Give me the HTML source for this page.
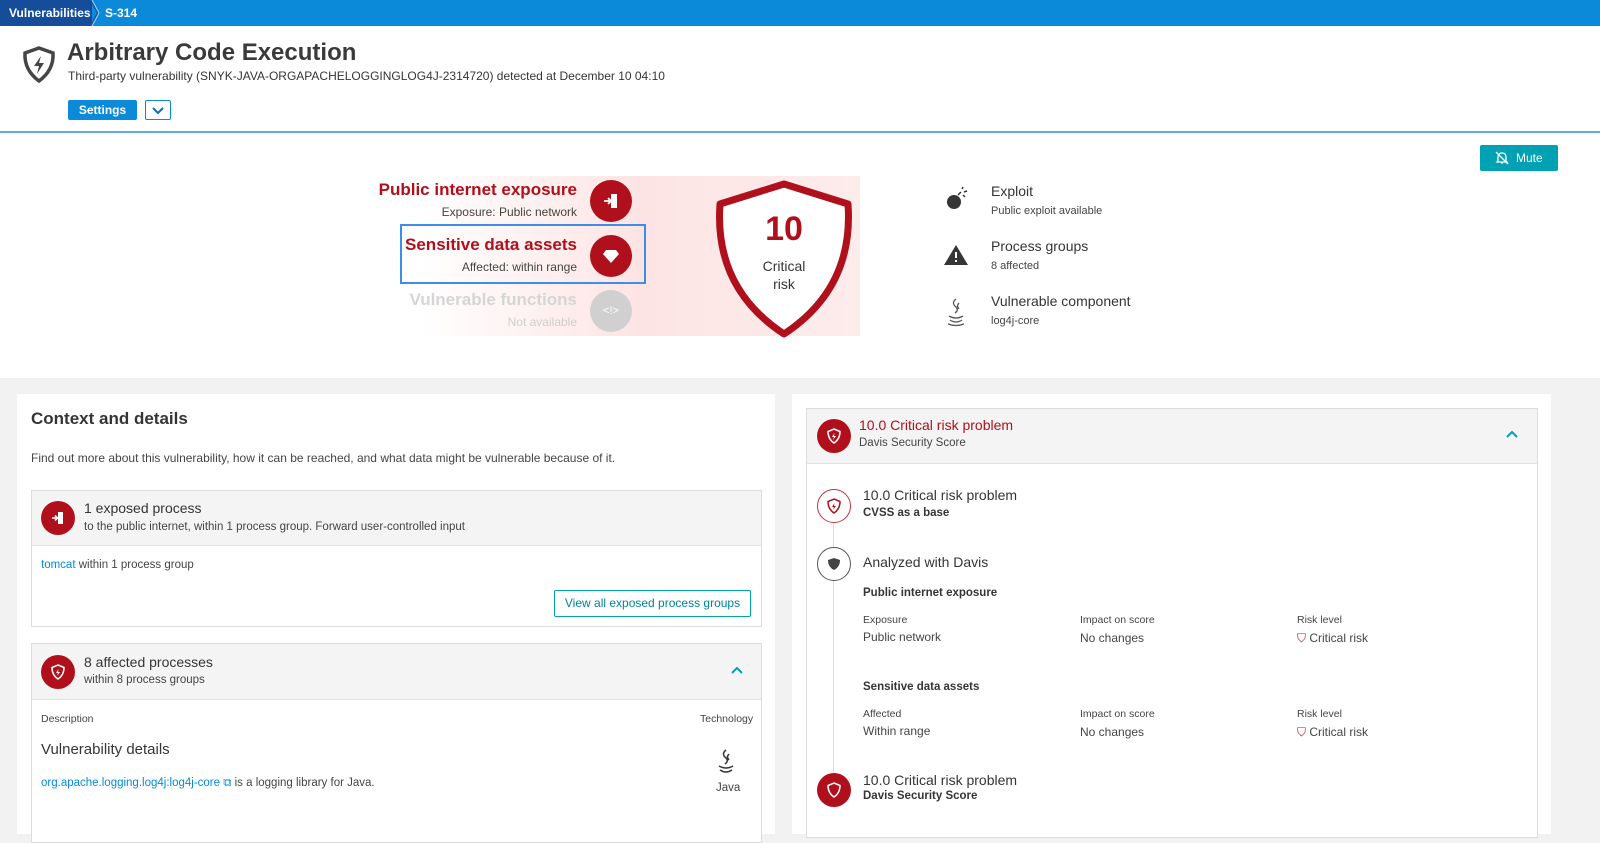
<!DOCTYPE html>
<html><head><meta charset="utf-8"><style>
*{box-sizing:border-box;margin:0;padding:0}
body{width:1600px;height:823px;overflow:hidden;font-family:"Liberation Sans",sans-serif;color:#353535;background:#f2f2f2;position:relative}
.a{position:absolute}
.top{left:0;top:0;width:1600px;height:26px;background:#0a8ad8}
.crumb{left:0;top:0;height:26px;width:92px;background:#154d9a;color:#fff;font-size:12px;font-weight:bold;line-height:26px;padding-left:9px}
.hdr{left:0;top:26px;width:1600px;height:107px;background:#fff;border-bottom:2px solid #5aaee3}
.sum{left:0;top:133px;width:1600px;height:245px;background:#fff}
.red{color:#b0101c}
.circ{border-radius:50%;background:#b0101c;display:flex;align-items:center;justify-content:center}
.card{background:#fff}
.box{border:1px solid #dcdcdc;background:#fff}
.bhd{background:#f4f4f4;border-bottom:1px solid #e2e2e2}
.sm{font-size:11px;color:#454545}
.t13{font-size:13px}
</style></head><body>
<div class="a top"></div>
<div class="a crumb">Vulnerabilities</div>
<svg class="a" style="left:90px;top:0" width="12" height="26"><path d="M0 0 L2 0 L9 13 L2 26 L0 26 L7 13Z" fill="#154d9a"/><path d="M2 0 L9 13 L2 26" stroke="#fff" stroke-width="1" fill="none" opacity=".7"/></svg>
<div class="a" style="left:105px;top:0;line-height:26px;color:#fff;font-size:12px;font-weight:bold">S-314</div>
<div class="a hdr"></div>
<svg class="a" style="left:22px;top:46px" width="34" height="38" viewBox="0 0 34 38"><path d="M17 2 L31 7 Q32 24 17 35 Q2 24 3 7Z" fill="none" stroke="#454545" stroke-width="3.5"/><path d="M19 10 L12 20 H17 L15 28 L22 17 H17Z" fill="#454545"/></svg>
<div class="a" style="left:67px;top:39px;font-size:24px;font-weight:bold;color:#3a3a3a">Arbitrary Code Execution</div>
<div class="a" style="left:68px;top:69px;font-size:12px;color:#353535">Third-party vulnerability (SNYK-JAVA-ORGAPACHELOGGINGLOG4J-2314720) detected at December 10 04:10</div>
<div class="a" style="left:68px;top:100px;width:69px;height:20px;background:#0a8ad8;border-radius:2px;color:#fff;font-size:12px;font-weight:bold;text-align:center;line-height:20px">Settings</div>
<div class="a" style="left:145px;top:100px;width:26px;height:20px;border:1px solid #0a8ad8;border-radius:2px"><svg width="24" height="18"><path d="M7 7 L12 12 L17 7" stroke="#0a6fb8" stroke-width="2" fill="none"/></svg></div>
<div class="a sum"></div>
<div class="a" style="left:1480px;top:145px;width:78px;height:26px;background:#00a1b2;border-radius:2px;color:#fff;font-size:12px;line-height:26px;padding-left:36px">Mute</div>
<svg class="a" style="left:1494px;top:150px" width="16" height="16"><path d="M4 11 V7 Q4 3 8 3 Q12 3 12 7 V11 L13 12 H3Z M7 13 H9" stroke="#fff" stroke-width="1.3" fill="none"/><path d="M2 2 L14 14" stroke="#fff" stroke-width="1.3"/></svg>
<div class="a" style="left:420px;top:176px;width:440px;height:160px;background:linear-gradient(90deg,rgba(255,255,255,0),#fde4e4 50%,#fdecec)"></div>
<div class="a red" style="left:300px;top:180px;width:277px;text-align:right;font-size:17px;font-weight:bold">Public internet exposure</div>
<div class="a sm" style="left:300px;top:205px;width:277px;text-align:right;font-size:12px">Exposure: Public network</div>
<div class="a circ" style="left:590px;top:180px;width:42px;height:42px"><svg width="18" height="18"><path d="M9 2 H15 V16 H9Z" fill="#fff"/><path d="M2 9 H8 M6 6 L9 9 L6 12" stroke="#fff" stroke-width="1.8" fill="none"/></svg></div>
<div class="a" style="left:400px;top:224px;width:246px;height:60px;border:2px solid #3d8ee8"></div>
<div class="a red" style="left:300px;top:235px;width:277px;text-align:right;font-size:17px;font-weight:bold">Sensitive data assets</div>
<div class="a sm" style="left:300px;top:260px;width:277px;text-align:right;font-size:12px">Affected: within range</div>
<div class="a circ" style="left:590px;top:235px;width:42px;height:42px"><svg width="18" height="16"><path d="M4 2 H14 L17 6 L9 15 L1 6Z" fill="#fff"/></svg></div>
<div class="a" style="left:300px;top:290px;width:277px;text-align:right;font-size:17px;font-weight:bold;color:#d5d5d5">Vulnerable functions</div>
<div class="a" style="left:300px;top:315px;width:277px;text-align:right;font-size:12px;color:#cfcfcf">Not available</div>
<div class="a circ" style="left:590px;top:290px;width:42px;height:42px;background:#d0d0d0;color:#fff;font-size:11px">&lt;!&gt;</div>
<svg class="a" style="left:712px;top:178px" width="144" height="162" viewBox="0 0 144 162"><path d="M72 6 L136 26 Q142 110 72 156 Q2 110 8 26Z" fill="#fff" stroke="#b0101c" stroke-width="7" stroke-linejoin="round"/></svg>
<div class="a" style="left:712px;top:210px;width:144px;text-align:center;font-size:34px;font-weight:bold;color:#b0101c">10</div>
<div class="a" style="left:712px;top:257px;width:144px;text-align:center;font-size:14px;line-height:18px;color:#353535">Critical<br>risk</div>
<svg class="a" style="left:944px;top:186px" width="24" height="26"><circle cx="10" cy="16" r="7" fill="#353535"/><path d="M14 9 L17 6 M18 3 L19 1 M20 6 L23 5 M19 9 L21 11" stroke="#353535" stroke-width="1.5"/></svg>
<div class="a t13" style="left:991px;top:183px;font-size:14px">Exploit</div>
<div class="a sm" style="left:991px;top:205px">Public exploit available</div>
<svg class="a" style="left:943px;top:243px" width="26" height="24"><path d="M13 2 L25 22 H1Z" fill="#353535"/><path d="M13 9 V15 M13 17 V19" stroke="#fff" stroke-width="2"/></svg>
<div class="a" style="left:991px;top:238px;font-size:14px">Process groups</div>
<div class="a sm" style="left:991px;top:260px">8 affected</div>
<svg class="a" style="left:945px;top:297px" width="22" height="30"><path d="M11 2 Q6 6 11 10 Q14 13 10 16 M14 6 Q11 9 14 12" stroke="#555" stroke-width="1.3" fill="none"/><path d="M4 19 Q11 23 18 19 M5 23 Q11 27 17 23 M3 27 Q11 30 19 27" stroke="#555" stroke-width="1.3" fill="none"/></svg>
<div class="a" style="left:991px;top:293px;font-size:14px">Vulnerable component</div>
<div class="a sm" style="left:991px;top:315px">log4j-core</div>

<div class="a card" style="left:17px;top:394px;width:758px;height:440px"></div>
<div class="a" style="left:31px;top:409px;font-size:17px;font-weight:bold;color:#353535">Context and details</div>
<div class="a sm" style="left:31px;top:451px;font-size:12px">Find out more about this vulnerability, how it can be reached, and what data might be vulnerable because of it.</div>
<div class="a box" style="left:31px;top:490px;width:731px;height:137px"></div>
<div class="a bhd" style="left:32px;top:491px;width:729px;height:55px"></div>
<div class="a circ" style="left:41px;top:501px;width:34px;height:34px"><svg width="16" height="16"><path d="M8 2 H13 V14 H8Z" fill="#fff"/><path d="M2 8 H7 M5 5.5 L7.5 8 L5 10.5" stroke="#fff" stroke-width="1.6" fill="none"/></svg></div>
<div class="a" style="left:84px;top:500px;font-size:14px">1 exposed process</div>
<div class="a sm" style="left:84px;top:521px;font-size:11.5px">to the public internet, within 1 process group. Forward user-controlled input</div>
<div class="a sm" style="left:41px;top:559px;font-size:11.5px"><span style="color:#008cdb">tomcat</span> within 1 process group</div>
<div class="a" style="left:554px;top:590px;width:197px;height:27px;border:1px solid #00a1b2;border-radius:2px;color:#00849a;font-size:12px;text-align:center;line-height:25px">View all exposed process groups</div>
<div class="a box" style="left:31px;top:643px;width:731px;height:200px"></div>
<div class="a bhd" style="left:32px;top:644px;width:729px;height:56px"></div>
<div class="a circ" style="left:41px;top:655px;width:34px;height:34px"><svg width="14" height="16"><path d="M7 1 L13 3.5 Q13 11 7 15 Q1 11 1 3.5Z" fill="none" stroke="#fff" stroke-width="1.5"/><path d="M7.5 5 L5 9 H7 L6 12 L9 8 H7Z" fill="#fff"/></svg></div>
<div class="a" style="left:84px;top:654px;font-size:14px">8 affected processes</div>
<div class="a sm" style="left:84px;top:674px;font-size:11.5px">within 8 process groups</div>
<svg class="a" style="left:729px;top:664px" width="16" height="12"><path d="M3 9 L8 4 L13 9" stroke="#00a1b2" stroke-width="2" fill="none"/></svg>
<div class="a sm" style="left:41px;top:713px;font-size:10.5px">Description</div>
<div class="a sm" style="left:700px;top:713px;font-size:10.5px">Technology</div>
<div class="a" style="left:41px;top:741px;font-size:15px">Vulnerability details</div>
<div class="a sm" style="left:41px;top:777px;font-size:11.5px"><span style="color:#008cdb">org.apache.logging.log4j:log4j-core ⧉</span> is a logging library for Java.</div>
<svg class="a" style="left:715px;top:748px" width="22" height="28"><path d="M11 2 Q6 6 11 10 Q14 13 10 16 M14 6 Q11 9 14 12" stroke="#333" stroke-width="1.5" fill="none"/><path d="M4 18 Q11 22 18 18 M5 22 Q11 26 17 22" stroke="#333" stroke-width="1.5" fill="none"/></svg>
<div class="a sm" style="left:716px;top:782px;font-size:11.5px">Java</div>

<div class="a card" style="left:792px;top:394px;width:759px;height:440px"></div>
<div class="a box" style="left:806px;top:408px;width:732px;height:430px"></div>
<div class="a bhd" style="left:807px;top:409px;width:730px;height:55px"></div>
<div class="a circ" style="left:817px;top:419px;width:34px;height:34px"><svg width="14" height="16"><path d="M7 1 L13 3.5 Q13 11 7 15 Q1 11 1 3.5Z" fill="none" stroke="#fff" stroke-width="1.5"/><path d="M7.5 5 L5 9 H7 L6 12 L9 8 H7Z" fill="#fff"/></svg></div>
<div class="a red" style="left:859px;top:417px;font-size:14px">10.0 Critical risk problem</div>
<div class="a sm" style="left:859px;top:437px;font-size:11.5px">Davis Security Score</div>
<svg class="a" style="left:1504px;top:428px" width="16" height="12"><path d="M3 9 L8 4 L13 9" stroke="#00a1b2" stroke-width="2" fill="none"/></svg>
<div class="a" style="left:833px;top:520px;width:1px;height:270px;background:#ddd"></div>
<div class="a" style="left:817px;top:489px;width:34px;height:34px;border-radius:50%;border:1.5px solid #c9303a;background:#fff;display:flex;align-items:center;justify-content:center"><svg width="14" height="16"><path d="M7 1 L13 3.5 Q13 11 7 15 Q1 11 1 3.5Z" fill="none" stroke="#b0101c" stroke-width="1.5"/><path d="M7.5 5 L5 9 H7 L6 12 L9 8 H7Z" fill="#b0101c"/></svg></div>
<div class="a" style="left:863px;top:487px;font-size:14px">10.0 Critical risk problem</div>
<div class="a" style="left:863px;top:507px;font-size:11.5px;font-weight:bold">CVSS as a base</div>
<div class="a" style="left:817px;top:547px;width:34px;height:34px;border-radius:50%;border:1.5px solid #555;background:#fff;display:flex;align-items:center;justify-content:center"><svg width="14" height="14"><path d="M7 1 L13 3 Q13 10 7 13 Q1 10 1 3Z" fill="#444"/></svg></div>
<div class="a" style="left:863px;top:554px;font-size:14px">Analyzed with Davis</div>
<div class="a" style="left:863px;top:587px;font-size:11.5px;font-weight:bold">Public internet exposure</div>
<div class="a sm" style="left:863px;top:614px;font-size:10.5px">Exposure</div>
<div class="a sm" style="left:1080px;top:614px;font-size:10.5px">Impact on score</div>
<div class="a sm" style="left:1297px;top:614px;font-size:10.5px">Risk level</div>
<div class="a sm" style="left:863px;top:630px;font-size:12px">Public network</div>
<div class="a sm" style="left:1080px;top:631px;font-size:12px">No changes</div>
<div class="a sm" style="left:1297px;top:631px;font-size:12px"><span class="red">⛉</span> Critical risk</div>
<div class="a" style="left:863px;top:681px;font-size:11.5px;font-weight:bold">Sensitive data assets</div>
<div class="a sm" style="left:863px;top:708px;font-size:10.5px">Affected</div>
<div class="a sm" style="left:1080px;top:708px;font-size:10.5px">Impact on score</div>
<div class="a sm" style="left:1297px;top:708px;font-size:10.5px">Risk level</div>
<div class="a sm" style="left:863px;top:724px;font-size:12px">Within range</div>
<div class="a sm" style="left:1080px;top:725px;font-size:12px">No changes</div>
<div class="a sm" style="left:1297px;top:725px;font-size:12px"><span class="red">⛉</span> Critical risk</div>
<div class="a circ" style="left:817px;top:773px;width:34px;height:34px"><svg width="14" height="16"><path d="M7 1 L13 3.5 Q13 11 7 15 Q1 11 1 3.5Z" fill="none" stroke="#fff" stroke-width="1.5"/></svg></div>
<div class="a" style="left:863px;top:772px;font-size:14px">10.0 Critical risk problem</div>
<div class="a" style="left:863px;top:790px;font-size:11.5px;font-weight:bold">Davis Security Score</div>
</body></html>
